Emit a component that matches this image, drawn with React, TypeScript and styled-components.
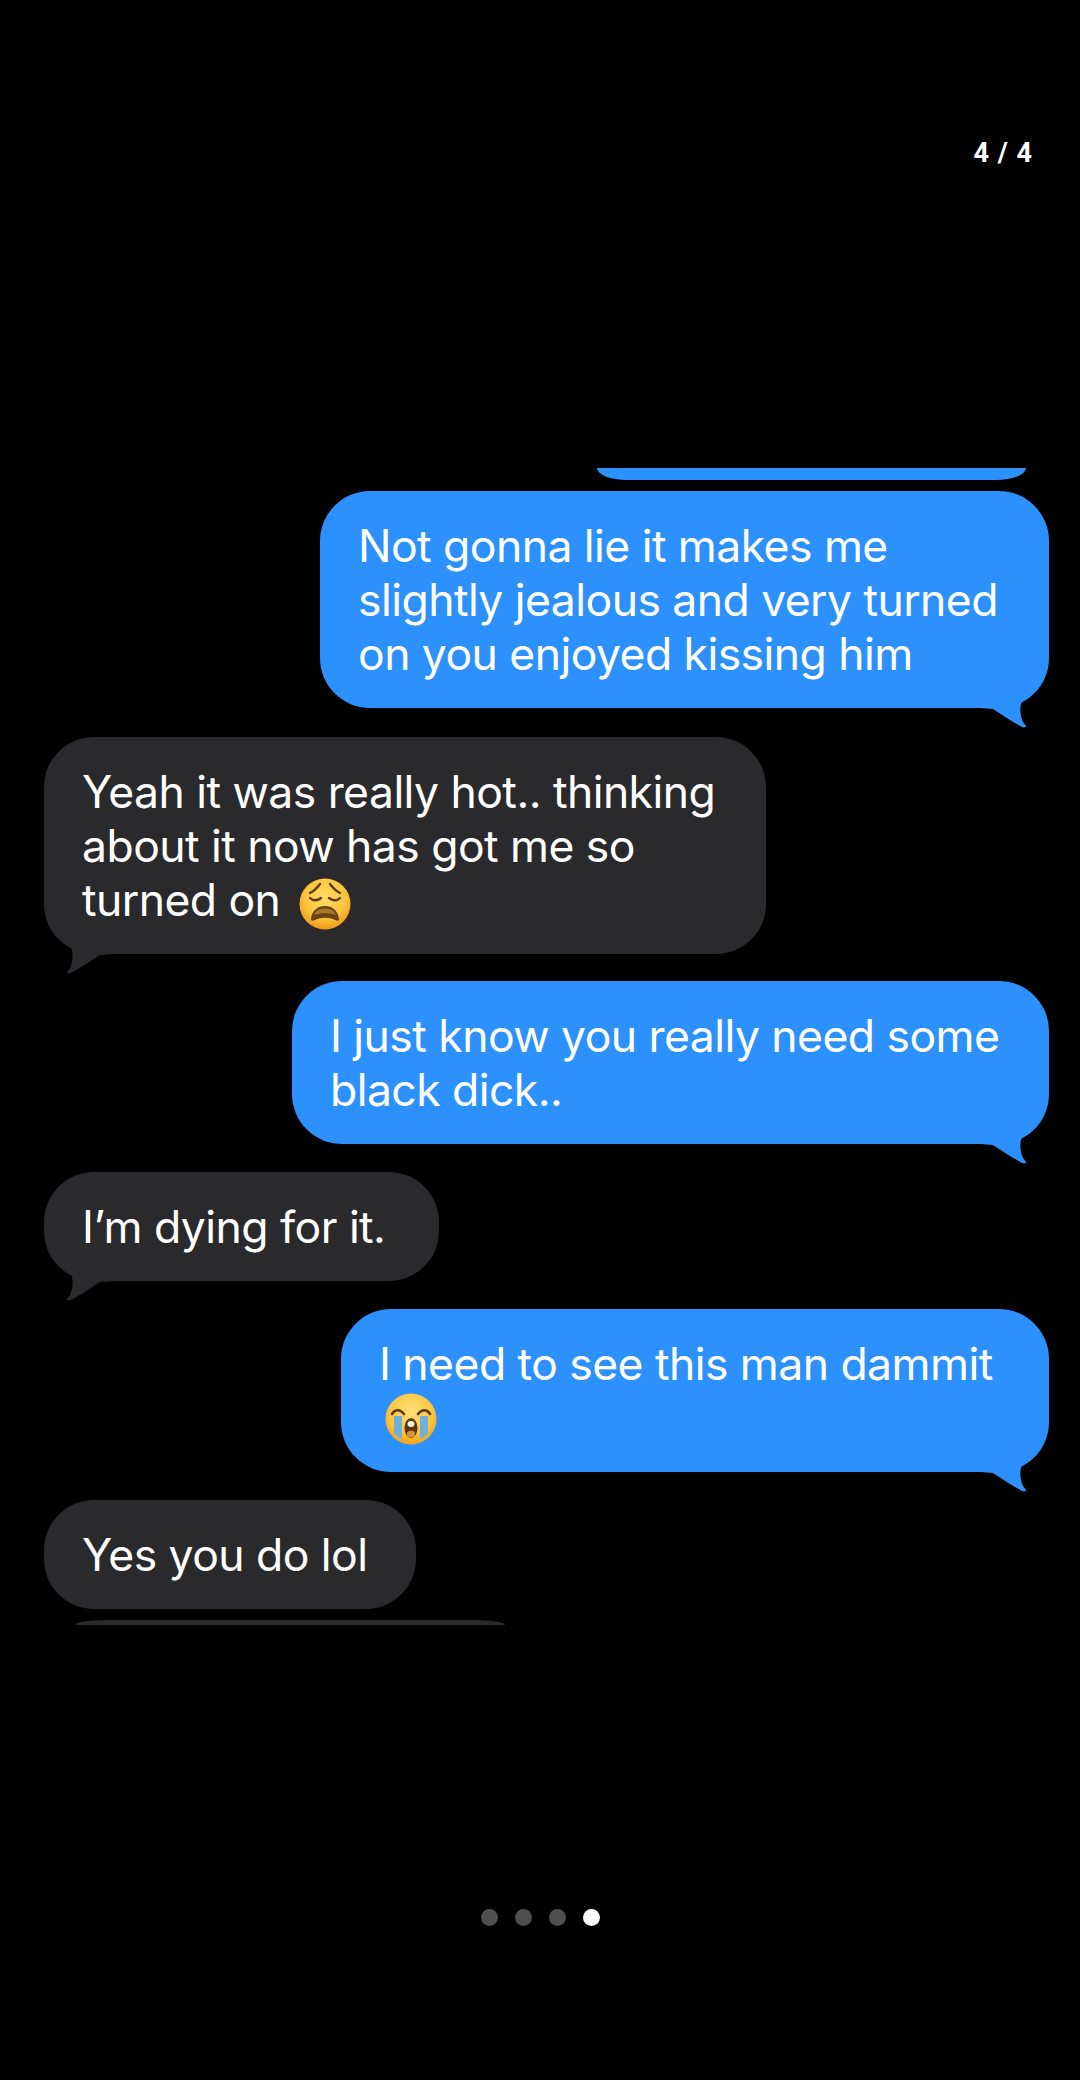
import React from "react";
import styled, { createGlobalStyle } from "styled-components";

const GlobalStyle = createGlobalStyle`
  html, body {
    margin: 0;
    padding: 0;
    background: #000;
  }
`;

const Screen = styled.div`
  width: 1080px;
  height: 2080px;
  background: #000;
  display: flex;
  flex-direction: column;
  font-family: Inter, "Liberation Sans", sans-serif;
  overflow: hidden;
`;

const Counter = styled.div`
  height: 34px;
  margin-top: 136px;
  padding-right: 47px;
  text-align: right;
  color: #fff;
  font-family: Roboto, "Liberation Sans", sans-serif;
  font-weight: 700;
  font-size: 27px;
  line-height: 34px;
  letter-spacing: 1px;
`;

const Thread = styled.div`
  margin-top: 298px;
  display: flex;
  flex-direction: column;
`;

interface BubbleProps {
  $me?: boolean;
  $width: number;
  $gap: number;
}

const Bubble = styled.div<BubbleProps>`
  position: relative;
  isolation: isolate;
  box-sizing: border-box;
  width: ${(p) => p.$width}px;
  margin-top: ${(p) => p.$gap}px;
  margin-left: ${(p) => (p.$me ? "auto" : "44px")};
  margin-right: ${(p) => (p.$me ? "31px" : "0")};
  padding: 28px 20px 27px 38px;
  border-radius: 50px;
  background: ${(p) => (p.$me ? "#2c91fd" : "#2a2a2c")};
  color: #fff;
  font-size: 44.5px;
  font-weight: 400;
  line-height: 54px;
  letter-spacing: -0.55px;
  white-space: nowrap;
`;

// bubbles cut off by the edge of the screenshot
const ClippedTop = styled.div`
  flex: none;
  width: 429px;
  height: 12px;
  margin-left: 597px;
  background: #2c91fd;
  border-radius: 0 0 30px 30px / 0 0 12px 12px;
`;

const ClippedBottom = styled.div`
  flex: none;
  width: 430px;
  height: 5px;
  margin-top: 11px;
  margin-left: 75px;
  background: #2a2a2c;
  border-radius: 30px 30px 0 0 / 5px 5px 0 0;
`;

const TailSvg = styled.svg<{ $me?: boolean }>`
  position: absolute;
  z-index: -1;
  bottom: -22px;
  width: 76px;
  height: 70px;
  ${(p) => (p.$me ? "right: 0;" : "left: 0; transform: scaleX(-1);")}
  fill: ${(p) => (p.$me ? "#2c91fd" : "#2a2a2c")};
`;

const Tail = ({ me }: { me?: boolean }) => (
  <TailSvg $me={me} viewBox="0 0 76 70">
    <path d="M74 0C74 8 72 16 70 20C67 26 62 32 50 40C46 44 47 56 50 62L53 66C53 68 50 67.500 49 67L37 60L20 49L7 48L0 0Z" />
  </TailSvg>
);

const EmojiSvg = styled.svg<{ $left: number; $drop: number }>`
  display: inline-block;
  width: 52px;
  height: 52px;
  margin: -20px 0 -20px ${(p) => p.$left}px;
  vertical-align: ${(p) => p.$drop}px;
`;

const WearyFace = () => (
  <EmojiSvg $left={19} $drop={6} viewBox="0 0 52 52">
    <defs>
      <radialGradient id="wearySkin" cx="50%" cy="38%" r="62%">
        <stop offset="0" stopColor="#ffdd67" />
        <stop offset="0.65" stopColor="#fcc33c" />
        <stop offset="1" stopColor="#f09a17" />
      </radialGradient>
    </defs>
    <circle cx="26" cy="26" r="25.500" fill="url(#wearySkin)" />
    <g fill="none" stroke="#5b3b12" strokeWidth="2.400" strokeLinecap="round">
      <path d="M21 6C18 10 15 13 11 15" />
      <path d="M31 6C34 10 37 13 41 15" />
      <path d="M11 20C14 23 18 23 22 20" />
      <path d="M30 20C34 23 38 23 41 20" />
    </g>
    <path d="M12 41C13 32 19 28 26 28C33 28 39 32 40 41C40.500 43 38 43 36 42C30 39 22 39 16 42C14 43 11.500 43 12 41Z" fill="#6a4313" />
    <path d="M15 37C17 32 21 30.500 26 30.500C31 30.500 35 32 37 37C30 34.500 22 34.500 15 37Z" fill="#a4772c" />
  </EmojiSvg>
);

const CryingFace = () => (
  <EmojiSvg $left={6} $drop={9} viewBox="0 0 52 52">
    <defs>
      <radialGradient id="cryingSkin" cx="50%" cy="35%" r="65%">
        <stop offset="0" stopColor="#ffe07a" />
        <stop offset="0.65" stopColor="#fcc63f" />
        <stop offset="1" stopColor="#f2a41e" />
      </radialGradient>
    </defs>
    <circle cx="26" cy="26" r="25.500" fill="url(#cryingSkin)" />
    <path d="M9 23H17V46C14 45 11 43 9 40Z" fill="#6fb1dc" />
    <path d="M35 23H43V40C41 43 38 45 35 46Z" fill="#6fb1dc" />
    <g fill="none" stroke="#5b3b12" strokeWidth="2.600" strokeLinecap="round">
      <path d="M7 21C10 16 15 16 19 21" />
      <path d="M33 21C37 16 42 16 45 21" />
    </g>
    <ellipse cx="26" cy="35" rx="6.500" ry="10" fill="#5b3710" />
    <ellipse cx="26" cy="31" rx="3.500" ry="3" fill="#f4efe2" />
    <ellipse cx="26" cy="41" rx="4" ry="3.200" fill="#d8963a" />
  </EmojiSvg>
);

const Dots = styled.div`
  margin-top: 284px;
  display: flex;
  justify-content: center;
  gap: 17px;
`;

const Dot = styled.span<{ $active?: boolean }>`
  width: 17px;
  height: 17px;
  border-radius: 50%;
  background: ${(p) => (p.$active ? "#fff" : "#4f4f4f")};
`;

export default function App() {
  return (
    <Screen>
      <GlobalStyle />
      <Counter>4 / 4</Counter>
      <Thread>
        <ClippedTop />
        <Bubble $me $width={729} $gap={11}>
          Not gonna lie it makes me
          <br />
          slightly jealous and very turned
          <br />
          on you enjoyed kissing him
          <Tail me />
        </Bubble>
        <Bubble $width={722} $gap={29}>
          Yeah it was really hot.. thinking
          <br />
          about it now has got me so
          <br />
          turned on
          <WearyFace />
          <Tail />
        </Bubble>
        <Bubble $me $width={757} $gap={27}>
          I just know you really need some
          <br />
          black dick..
          <Tail me />
        </Bubble>
        <Bubble $width={395} $gap={28}>
          I’m dying for it.
          <Tail />
        </Bubble>
        <Bubble $me $width={708} $gap={28}>
          I need to see this man dammit
          <br />
          <CryingFace />
          <Tail me />
        </Bubble>
        <Bubble $width={372} $gap={28}>
          Yes you do lol
        </Bubble>
        <ClippedBottom />
      </Thread>
      <Dots>
        <Dot />
        <Dot />
        <Dot />
        <Dot $active />
      </Dots>
    </Screen>
  );
}
